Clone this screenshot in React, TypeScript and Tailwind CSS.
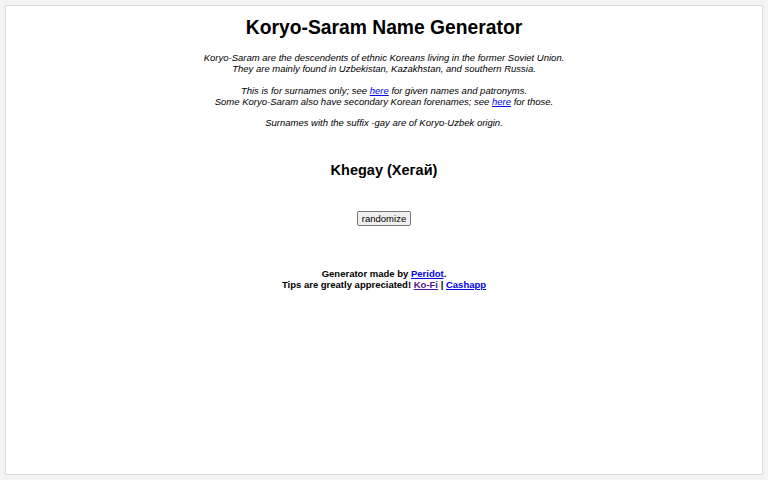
import { useState } from 'react'

const surnames = [
  ['Khegay', 'Хегай'],
  ['Kim', 'Ким'],
  ['Pak', 'Пак'],
  ['Tsoy', 'Цой'],
  ['Ten', 'Тен'],
  ['Li', 'Ли'],
  ['Shegay', 'Шегай'],
  ['Ogay', 'Огай'],
]

export default function App() {
  const [idx, setIdx] = useState(0)
  const [latin, cyr] = surnames[idx]

  const randomize = () => setIdx(Math.floor(Math.random() * surnames.length))

  return (
    <div className="flex h-[480px] bg-[#f3f3f3] p-[5px] font-['Liberation_Sans',Arial,sans-serif] text-black">
      <div className="flex flex-1 flex-col items-center border border-[#dcdcdc] bg-white text-center">
        <h1 className="mt-[9px] text-[19.3px] leading-[26px] font-bold">Koryo-Saram Name Generator</h1>

        <div className="mt-[11px] text-[9.5px] leading-[11px] italic">
          <p>
            Koryo-Saram are the descendents of ethnic Koreans living in the former Soviet Union.
            <br />
            They are mainly found in Uzbekistan, Kazakhstan, and southern Russia.
          </p>
          <p className="mt-[11px]">
            This is for surnames only; see{' '}
            <a href="#" className="text-[#0000ee] underline">
              here
            </a>{' '}
            for given names and patronyms.
            <br />
            Some Koryo-Saram also have secondary Korean forenames; see{' '}
            <a href="#" className="text-[#0000ee] underline">
              here
            </a>{' '}
            for those.
          </p>
          <p className="mt-[10px]">Surnames with the suffix -gay are of Koryo-Uzbek origin.</p>
        </div>

        <h2 className="mt-[32px] text-[14.5px] leading-[20px] font-bold">
          {latin} ({cyr})
        </h2>

        <button
          onClick={randomize}
          className="mt-[31px] rounded-[2px] border border-[#767676] bg-[#efefef] px-[4px] text-[9.5px] leading-[13px]"
        >
          randomize
        </button>

        <div className="mt-[42px] text-[9.5px] leading-[11px] font-bold">
          Generator made by{' '}
          <a href="#" className="text-[#0000ee] underline">
            Peridot
          </a>
          .
          <br />
          Tips are greatly appreciated!{' '}
          <a href="#" className="text-[#551a8b] underline">
            Ko-Fi
          </a>{' '}
          |{' '}
          <a href="#" className="text-[#0000ee] underline">
            Cashapp
          </a>
        </div>
      </div>
    </div>
  )
}
